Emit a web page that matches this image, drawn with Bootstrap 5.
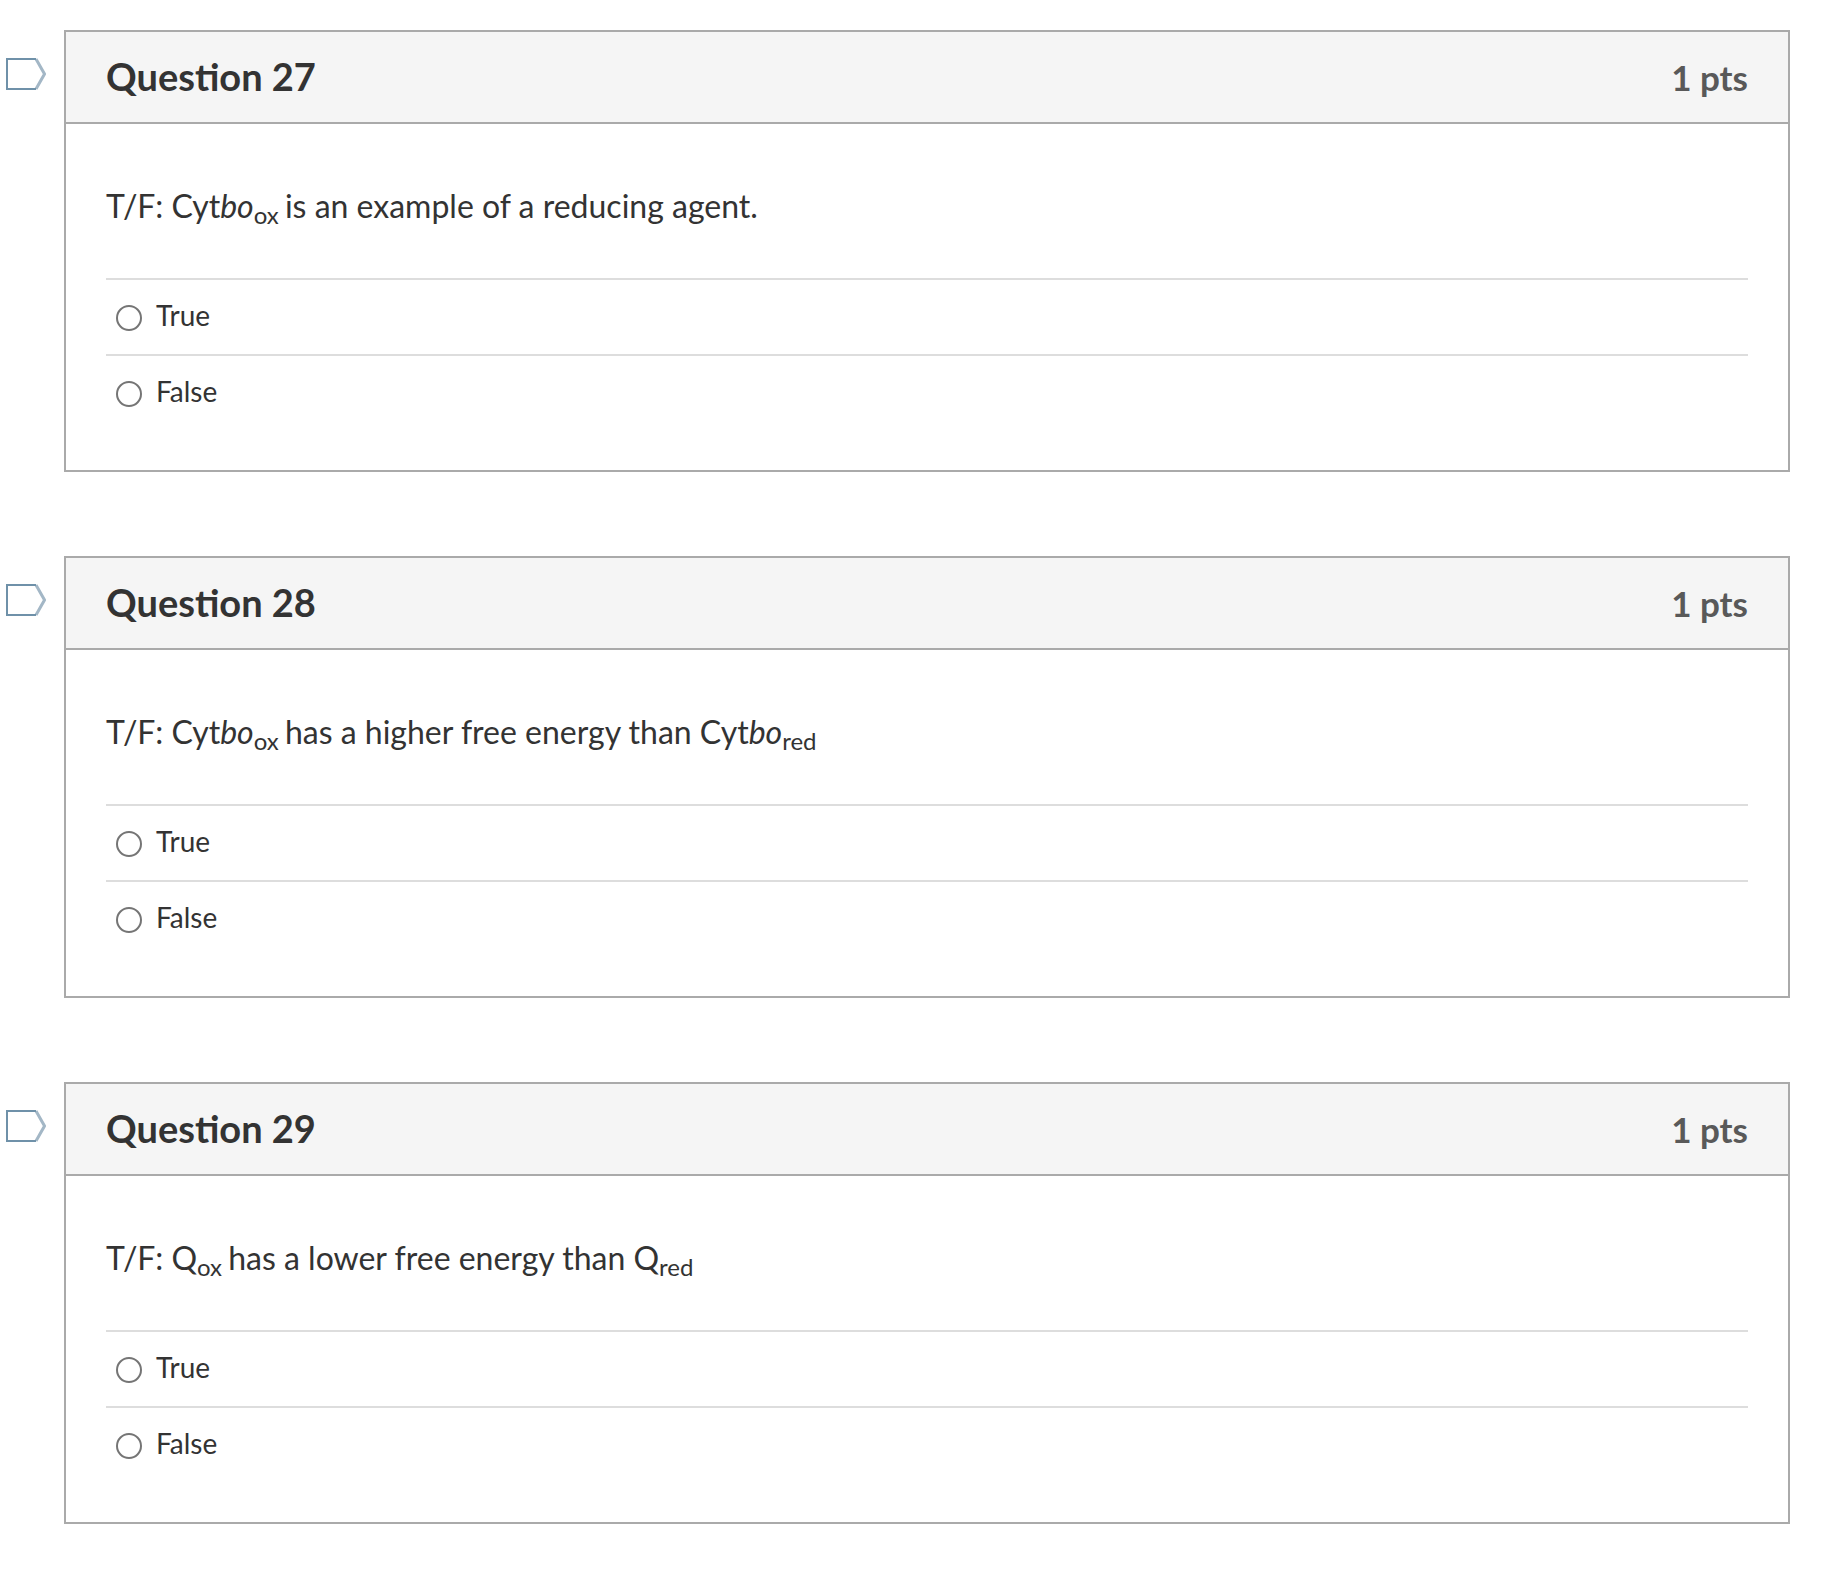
<!DOCTYPE html>
<html lang="en">
<head>
<meta charset="utf-8">
<meta name="viewport" content="width=device-width, initial-scale=1">
<title>Quiz</title>
<link rel="stylesheet" href="https://cdn.jsdelivr.net/npm/bootstrap@5.3.0/dist/css/bootstrap.min.css">
<style>
  body { font-family: Lato, sans-serif; color: #333; background: #fff; }
  .quiz { padding: 30px 50px 30px 6px; gap: 84px; }
  .flag-btn { width: 40px; height: 32px; margin: 28px 18px 0 0; line-height: 1; }
  .flag-btn svg { display: block; }
  .question { border: 2px solid #aaa; border-radius: 0; color: #333; min-width: 0; }
  .question .card-header { background: #f5f5f5; border-bottom: 2px solid #aaa; border-radius: 0; padding: 0 40px 2px; }
  .question .card-body { padding: 62px 40px 40px; }
  .q-name { font-size: 38px; line-height: 88px; }
  .q-points { font-size: 35px; line-height: 48px; color: #595959; }
  .q-text { font-size: 32px; line-height: 40px; margin-bottom: 52px; }
  .q-text sub { font-size: 24px; line-height: 0; }
  .answer { border-top: 2px solid #ddd; padding: 18px 10px 22px; }
  .answer .form-check-input { width: 26px; height: 26px; margin: 7px 14px 0 0; border: 2px solid #757575; }
  .answer label { font-size: 28px; line-height: 34px; }
</style>
</head>
<body>
<main class="quiz d-flex flex-column">

  <section class="d-flex align-items-start">
    <button type="button" class="flag-btn btn border-0 p-0 flex-shrink-0" aria-label="Flag question 27">
      <svg width="40" height="32" viewBox="0 0 40 32" fill="none"><path d="M30 1L38.500 16L30 31" stroke="#a3b7c6" stroke-width="3"/><path d="M30 1H1V31H30" stroke="#6f91a9" stroke-width="2"/></svg>
    </button>
    <div class="question card flex-grow-1">
      <div class="card-header d-flex justify-content-between align-items-baseline">
        <h2 class="q-name fw-bold m-0">Question 27</h2>
        <span class="q-points fw-bold">1 pts</span>
      </div>
      <div class="card-body">
        <p class="q-text">T/F: Cyt<em>bo</em><sub>ox&nbsp;</sub>is an example of a reducing agent.</p>
        <div class="answer d-flex align-items-start"><input class="form-check-input" type="radio" name="q27" id="q27t"><label for="q27t">True</label></div>
        <div class="answer d-flex align-items-start"><input class="form-check-input" type="radio" name="q27" id="q27f"><label for="q27f">False</label></div>
      </div>
    </div>
  </section>

  <section class="d-flex align-items-start">
    <button type="button" class="flag-btn btn border-0 p-0 flex-shrink-0" aria-label="Flag question 28">
      <svg width="40" height="32" viewBox="0 0 40 32" fill="none"><path d="M30 1L38.500 16L30 31" stroke="#a3b7c6" stroke-width="3"/><path d="M30 1H1V31H30" stroke="#6f91a9" stroke-width="2"/></svg>
    </button>
    <div class="question card flex-grow-1">
      <div class="card-header d-flex justify-content-between align-items-baseline">
        <h2 class="q-name fw-bold m-0">Question 28</h2>
        <span class="q-points fw-bold">1 pts</span>
      </div>
      <div class="card-body">
        <p class="q-text">T/F: Cyt<em>bo</em><sub>ox&nbsp;</sub>has a higher free energy than Cyt<em>bo</em><sub>red</sub></p>
        <div class="answer d-flex align-items-start"><input class="form-check-input" type="radio" name="q28" id="q28t"><label for="q28t">True</label></div>
        <div class="answer d-flex align-items-start"><input class="form-check-input" type="radio" name="q28" id="q28f"><label for="q28f">False</label></div>
      </div>
    </div>
  </section>

  <section class="d-flex align-items-start">
    <button type="button" class="flag-btn btn border-0 p-0 flex-shrink-0" aria-label="Flag question 29">
      <svg width="40" height="32" viewBox="0 0 40 32" fill="none"><path d="M30 1L38.500 16L30 31" stroke="#a3b7c6" stroke-width="3"/><path d="M30 1H1V31H30" stroke="#6f91a9" stroke-width="2"/></svg>
    </button>
    <div class="question card flex-grow-1">
      <div class="card-header d-flex justify-content-between align-items-baseline">
        <h2 class="q-name fw-bold m-0">Question 29</h2>
        <span class="q-points fw-bold">1 pts</span>
      </div>
      <div class="card-body">
        <p class="q-text">T/F: Q<sub>ox&nbsp;</sub>has a lower free energy than Q<sub>red</sub></p>
        <div class="answer d-flex align-items-start"><input class="form-check-input" type="radio" name="q29" id="q29t"><label for="q29t">True</label></div>
        <div class="answer d-flex align-items-start"><input class="form-check-input" type="radio" name="q29" id="q29f"><label for="q29f">False</label></div>
      </div>
    </div>
  </section>

</main>
<script src="https://cdn.jsdelivr.net/npm/bootstrap@5.3.0/dist/js/bootstrap.bundle.min.js"></script>
</body>
</html>
